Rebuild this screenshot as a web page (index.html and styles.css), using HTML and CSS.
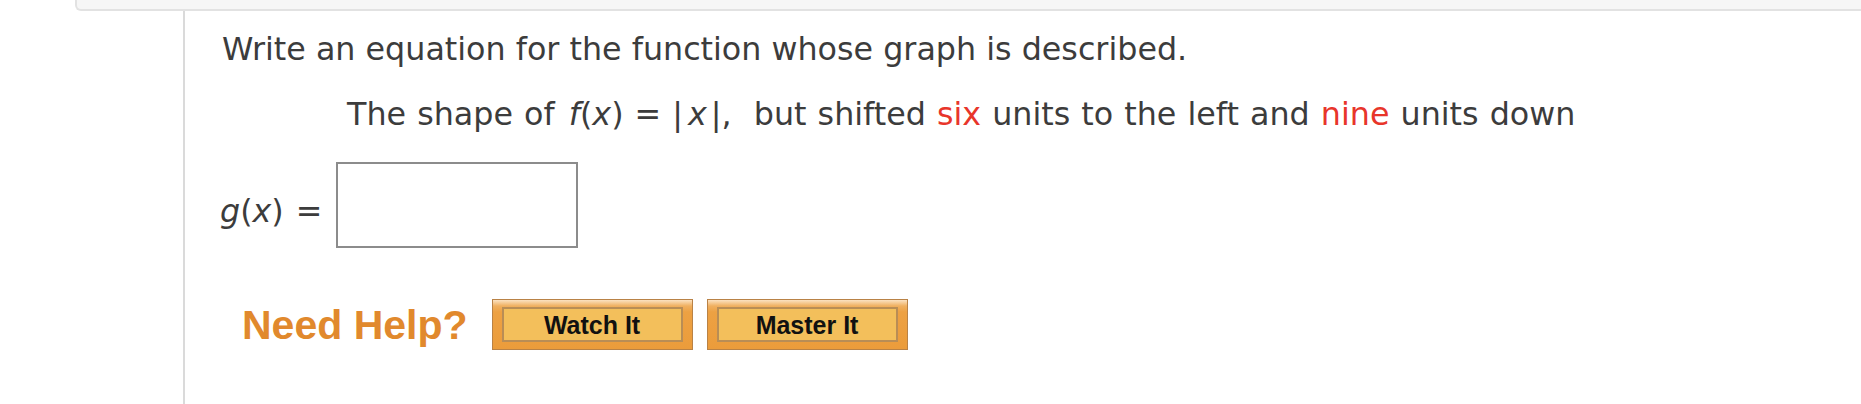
FILE: index.html
```html
<!DOCTYPE html>
<html>
<head>
<meta charset="utf-8">
<link rel="stylesheet" href="styles.css">
</head>
<body>
<div class="topbar"></div>
<div class="question">
  <p class="title">Write an equation for the function whose graph is described.</p>
  <p class="desc">The shape of <span class="math"><i>f</i>(<i>x</i>) = |<i class="absx">x</i>|,</span>&nbsp; but shifted <span class="red">six</span> units to the left and <span class="red">nine</span> units down</p>
  <div class="answer">
    <span class="label"><i>g</i>(<i>x</i>) =</span>
    <span class="box"></span>
  </div>
  <div class="help">
    <span class="need">Need Help?</span>
    <span class="btn"><span class="btn-inner">Watch It</span></span>
    <span class="btn"><span class="btn-inner">Master It</span></span>
  </div>
</div>
</body>
</html>
```

FILE: styles.css
```css
html, body {
  margin: 0;
  padding: 0;
  background: #ffffff;
}
body {
  width: 1861px;
  height: 404px;
  overflow: hidden;
  font-family: "DejaVu Sans", Verdana, sans-serif;
  color: #3c3c3c;
}
.topbar {
  margin-left: 75px;
  height: 9px;
  background: #f6f6f6;
  border-left: 2px solid #e2e2e2;
  border-bottom: 2px solid #e2e2e2;
  border-bottom-left-radius: 6px;
}
.question {
  margin-left: 183px;
  border-left: 2px solid #dadada;
  padding: 19px 0 0 37px;
  height: 393px;
  box-sizing: border-box;
}
.title, .desc {
  margin: 0;
  font-size: 31.75px;
  line-height: 38px;
  white-space: nowrap;
}
.desc {
  margin-top: 27px;
  padding-left: 125px;
  word-spacing: 1px;
}
.math {
  margin-left: 3px;
}
.absx {
  margin: 0 4px 0 5px;
}
.red {
  color: #e8352a;
}
.answer {
  display: flex;
  align-items: flex-start;
  margin-top: 29px;
}
.label {
  font-size: 31.75px;
  line-height: 38px;
  margin-top: 30px;
  margin-left: -2px;
  word-spacing: 2px;
}
.box {
  display: block;
  width: 238px;
  height: 82px;
  border: 2px solid #8c8c8c;
  margin-left: 14px;
}
.help {
  display: flex;
  align-items: center;
  margin-top: 51px;
  padding-left: 20px;
}
.need {
  font-family: "Liberation Sans", Arial, sans-serif;
  font-weight: bold;
  font-size: 41px;
  color: #e1892d;
  margin-right: 24px;
  margin-top: 1px;
}
.btn {
  display: block;
  width: 201px;
  height: 51px;
  box-sizing: border-box;
  border: 1px solid #b98246;
  background: linear-gradient(#fbe2c2 0px, #f0b060 6px, #eda143 12px, #eb9c3b 100%);
  padding: 7px 9px 7px 9px;
  margin-right: 14px;
}
.btn-inner {
  display: flex;
  align-items: center;
  justify-content: center;
  height: 100%;
  box-sizing: border-box;
  border: 2px solid #b98d55;
  background: #f3bf5b;
  font-family: "Liberation Sans", Arial, sans-serif;
  font-weight: bold;
  font-size: 25px;
  color: #111111;
  padding-top: 1px;
}
```
